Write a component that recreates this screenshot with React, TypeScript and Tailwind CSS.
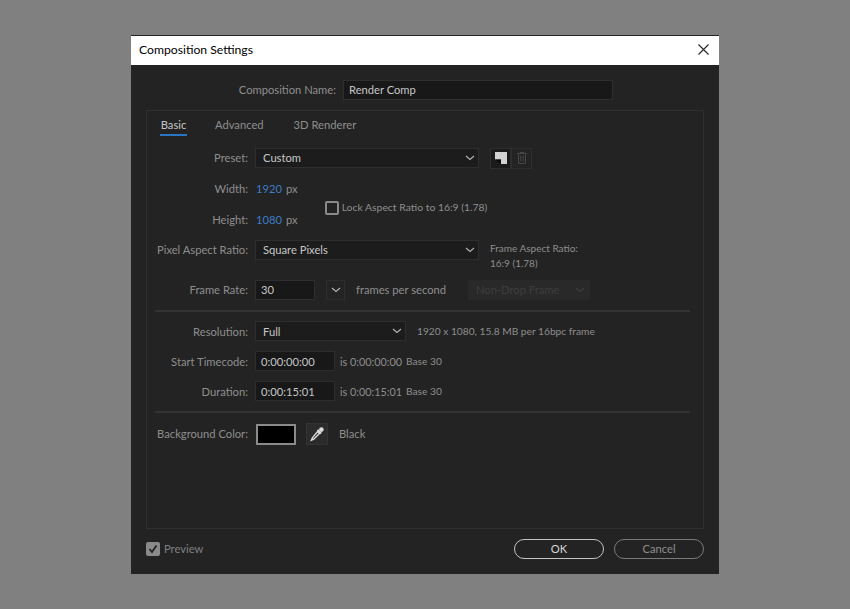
import { ReactNode } from 'react';

function Chevron({ color = '#b4b4b4' }: { color?: string }) {
  return (
    <svg width="10" height="6" viewBox="0 0 10 6" fill="none">
      <path d="M1 1l4 3.5L9 1" stroke={color} strokeWidth="1.1" />
    </svg>
  );
}

function Label({ children, low }: { children: ReactNode; low?: boolean }) {
  return (
    <div className={`w-[101px] shrink-0 ${low ? '' : 'pb-[1px]'} text-right text-[#8e8e8e] whitespace-nowrap`}>
      {children}
    </div>
  );
}

function Select({ value, width, low }: { value: string; width: string; low?: boolean }) {
  return (
    <div className={`${width} h-5 shrink-0 flex items-center justify-between pl-[7px] pr-[3px] bg-[#1c1c1c] border border-[#2e2e2e] text-[#c6c6c6]`}>
      <span className={low ? '' : 'pb-[1px]'}>{value}</span>
      <Chevron />
    </div>
  );
}

function Timecode({ value, info }: { value: string; info: string }) {
  return (
    <>
      <div className="w-20 h-5 shrink-0 flex items-center pl-[5px] bg-[#181818] border border-[#2e2e2e] text-[#c6c6c6]">{value}</div>
      <span className="ml-[5px] w-[66px] text-[#8e8e8e] text-[10.8px] whitespace-nowrap">{info}</span>
      <span className="text-[#8e8e8e] text-[10.2px]">Base 30</span>
    </>
  );
}

export default function App() {
  return (
    <div
      className="min-h-[609px] bg-[#808080] pt-[36px] pl-[131px] text-[11.2px] leading-[15px]"
      style={{ fontFamily: 'Lato, "Noto Sans", sans-serif' }}
    >
      <div className="w-[588px] h-[538px] flex flex-col bg-[#232323] shadow-[0_-1px_0_#222]">
        {/* Title bar */}
        <div className="h-[29px] shrink-0 flex items-center justify-between pl-2 pr-[10px] pb-[2px] bg-white text-black text-[12.2px]">
          <span>Composition Settings</span>
          <svg width="11" height="11" viewBox="0 0 11 11" fill="none">
            <path d="M0.5 0.5l10 10M10.5 0.5l-10 10" stroke="#222" strokeWidth="1.1" />
          </svg>
        </div>

        <div className="flex flex-col flex-1 px-[15px] pt-[15px]">
          {/* Name */}
          <div className="h-5 flex items-center">
            <div className="w-[190px] pb-[1px] text-right text-[#8e8e8e]">Composition Name:</div>
            <div className="ml-[7px] w-[270px] h-5 flex items-center pl-[5px] pb-[1px] bg-[#181818] border border-[#2e2e2e] text-[#c6c6c6]">
              Render Comp
            </div>
          </div>

          {/* Panel */}
          <div className="mt-[10px] h-[419px] border border-[#2f2f2f] flex flex-col">
            <div className="h-[25px] shrink-0 flex items-start pl-[13px] text-[#8e8e8e]">
              <div className="h-[25px] w-[27px] pt-[6px] border-b-2 border-[#2b74c4] text-[#c6c6c6] text-center whitespace-nowrap">Basic</div>
              <div className="ml-7 pt-[6px]">Advanced</div>
              <div className="ml-[30px] pt-[6px]">3D Renderer</div>
            </div>

            <div className="mt-[12px] h-5 flex items-center">
              <Label>Preset:</Label>
              <div className="ml-[7px]"><Select value="Custom" width="w-[224px]" /></div>
              <div className="ml-[11px] flex items-center h-[21px]">
                <div className="w-[21px] h-[21px] flex items-center justify-center bg-[#1b1b1b] border border-[#2e2e2e]">
                  <svg width="12" height="12" viewBox="0 0 12 12">
                    <path d="M0 0h12v12H6V7.5H0z" fill="#d2d2d2" />
                    <path d="M0 7.5h6V12z" fill="#0c0c0c" />
                  </svg>
                </div>
                <div className="w-[21px] h-[21px] flex items-center justify-center border border-[#2e2e2e]">
                  <svg width="10" height="12" viewBox="0 0 10 12" fill="none" stroke="#474747">
                    <path d="M0 1.5h10M3 1.5V.5h4v1M1.5 1.5v10h7v-10M3.8 3.5v6M6.2 3.5v6" />
                  </svg>
                </div>
              </div>
            </div>

            <div className="mt-[11px] flex items-center">
              <div className="flex flex-col gap-[10px]">
                <div className="h-5 flex items-center">
                  <Label>Width:</Label>
                  <span className="ml-2 w-[27px] pb-[1px] text-[#3d7dc4]">1920</span>
                  <span className="ml-[3px] pb-[1px] text-[#8e8e8e]">px</span>
                </div>
                <div className="h-5 flex items-center">
                  <Label low>Height:</Label>
                  <span className="ml-2 w-[27px] text-[#3d7dc4]">1080</span>
                  <span className="ml-[3px] text-[#8e8e8e]">px</span>
                </div>
              </div>
              <div className="ml-[27px] mt-[7px] flex items-center">
                <div className="w-[14px] h-[14px] rounded-[2px] border-2 border-[#8a8a8a]" />
                <span className="ml-[3px] text-[#8e8e8e] text-[10.4px]">Lock Aspect Ratio to 16:9 (1.78)</span>
              </div>
            </div>

            <div className="mt-[11px] h-5 flex items-start">
              <div className="h-5 flex items-center"><Label>Pixel Aspect Ratio:</Label></div>
              <div className="ml-[7px]"><Select value="Square Pixels" width="w-[224px]" /></div>
              <div className="ml-[11px] mt-[1px] text-[#8e8e8e] text-[10px]">
                <div>Frame Aspect Ratio:</div>
                <div>16:9 (1.78)</div>
              </div>
            </div>

            <div className="mt-[20px] h-5 flex items-center">
              <Label>Frame Rate:</Label>
              <div className="ml-[7px] w-[60px] h-5 flex items-center pl-[5px] pb-[1px] bg-[#181818] border border-[#2e2e2e] text-[#c6c6c6]">30</div>
              <div className="ml-[11px] w-[19px] h-5 flex items-center justify-center border border-[#2e2e2e]"><Chevron /></div>
              <span className="ml-[11px] w-[112px] pb-[1px] text-[#8e8e8e]">frames per second</span>
              <div className="w-[122px] h-5 flex items-center justify-between pl-2 pr-[5px] pb-[1px] bg-[#292929] text-[#3e3e3e]">
                <span>Non-Drop Frame</span>
                <Chevron color="#3e3e3e" />
              </div>
            </div>

            <div className="mt-[10px] mx-2 h-[2px] w-[535px] bg-[#333333]" />

            <div className="mt-[9px] h-5 flex items-center">
              <Label low>Resolution:</Label>
              <div className="ml-[7px]"><Select value="Full" width="w-[151px]" low /></div>
              <span className="ml-[11px] text-[#8e8e8e] text-[10.2px]">1920 x 1080, 15.8 MB per 16bpc frame</span>
            </div>

            <div className="mt-[10px] h-5 flex items-center">
              <Label low>Start Timecode:</Label>
              <div className="ml-[7px] flex items-center"><Timecode value="0:00:00:00" info="is 0:00:00:00" /></div>
            </div>

            <div className="mt-[10px] h-5 flex items-center">
              <Label low>Duration:</Label>
              <div className="ml-[7px] flex items-center"><Timecode value="0:00:15:01" info="is 0:00:15:01" /></div>
            </div>

            <div className="mt-[10px] mx-2 h-[2px] w-[535px] bg-[#333333]" />

            <div className="mt-[10px] h-[22px] flex items-center">
              <Label>Background Color:</Label>
              <div className="ml-2 w-10 h-[21px] bg-black border-2 border-[#8a8a8a]" />
              <div className="ml-[10px] w-[22px] h-[22px] flex items-center justify-center bg-[#2b2b2b] border border-[#333333]">
                <svg width="18" height="18" viewBox="0 0 18 18" fill="none">
                  <path d="M10.2 4.2l3.6 3.6-1.4 1.4-3.6-3.6z" fill="#dcdcdc" />
                  <circle cx="13.4" cy="4.6" r="2.3" fill="#dcdcdc" />
                  <path d="M9.6 6.6l1.8 1.8-5.6 5.8-2.4 1 1-2.4z" stroke="#dcdcdc" strokeWidth="1.4" />
                </svg>
              </div>
              <span className="ml-[11px] pb-[1px] text-[#8e8e8e]">Black</span>
            </div>
          </div>

          {/* Footer */}
          <div className="mt-[10px] h-5 flex items-center">
            <div className="w-[14px] h-[14px] rounded-[2px] bg-[#8a8a8a] flex items-center justify-center">
              <svg width="10" height="10" viewBox="0 0 10 10" fill="none">
                <path d="M1.5 5l2.5 3 4.5-6.5" stroke="#1f1f1f" strokeWidth="1.7" />
              </svg>
            </div>
            <span className="ml-1 pb-[1px] text-[#808080]">Preview</span>
            <div className="ml-auto w-[90px] h-5 pb-[1px] rounded-full border border-[#c4c4c4] flex items-center justify-center text-[#d6d6d6]">OK</div>
            <div className="ml-[10px] w-[90px] h-5 pb-[1px] rounded-full border border-[#7a7a7a] flex items-center justify-center text-[#8e8e8e]">Cancel</div>
          </div>
        </div>
      </div>
    </div>
  );
}
